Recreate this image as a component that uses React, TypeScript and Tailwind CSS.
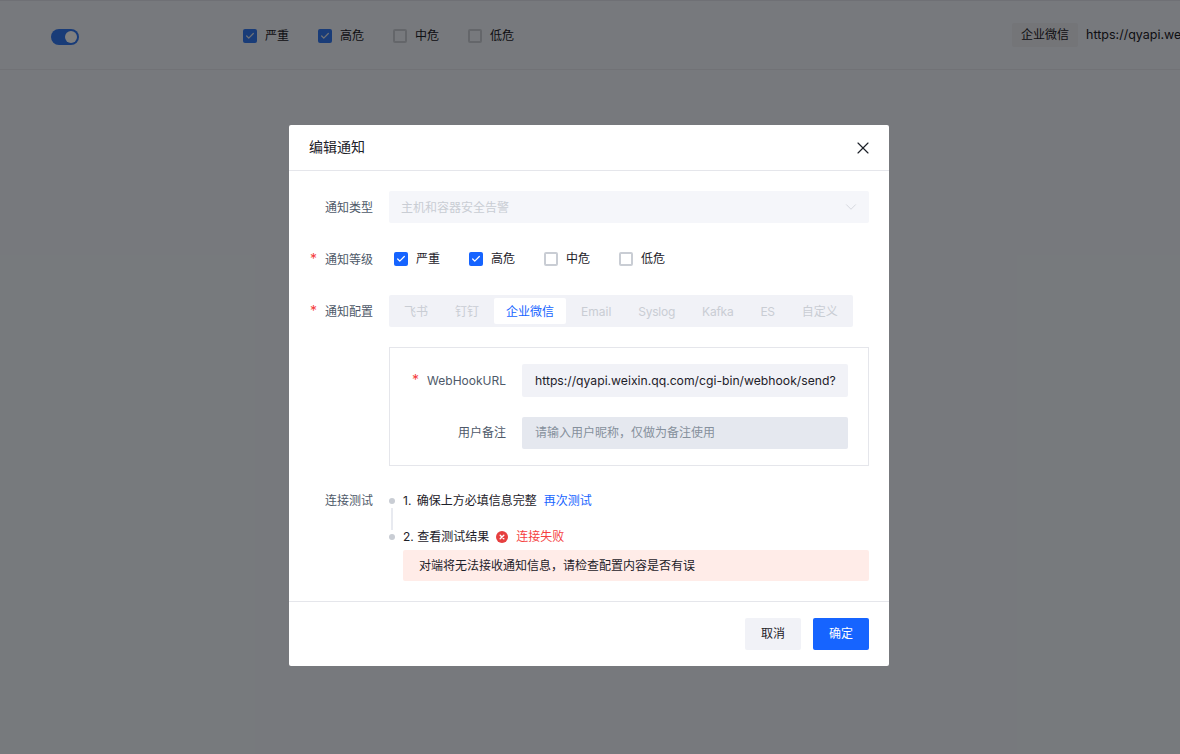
import type { ReactNode } from "react";
import { Check, ChevronDown, X } from "lucide-react";

const font = "font-['Inter','Noto_Sans_CJK_SC',sans-serif]";
const levels = [
  { name: "严重", on: true },
  { name: "高危", on: true },
  { name: "中危", on: false },
  { name: "低危", on: false },
];
const tabs = ["飞书", "钉钉", "企业微信", "Email", "Syslog", "Kafka", "ES", "自定义"];
const tightTabs = ["Syslog", "Kafka", "ES"];
const url = "https://qyapi.weixin.qq.com/cgi-bin/webhook/send?";

const Levels = ({ page }: { page?: boolean }) => (
  <div className="flex items-center gap-[29px]">
    {levels.map((l) => (
      <label key={l.name} className="flex items-center gap-2 whitespace-nowrap text-xs leading-[14px] text-[#1d2129]">
        {l.on ? (
          <span className={`flex h-[14px] w-[14px] items-center justify-center rounded-[2px] ${page ? "bg-[#3278f0]" : "bg-[#1664ff]"}`}>
            <Check size={10} strokeWidth={3} className={page ? "text-[#dfe3ea]" : "text-white"} />
          </span>
        ) : (
          <span className="h-[14px] w-[14px] rounded-[2px] border-2 border-[#c9cdd4]" />
        )}
        {l.name}
      </label>
    ))}
  </div>
);

const Star = () => <span className="mr-2 text-sm leading-3 text-[#f53f3f]">*</span>;

const FormRow = ({ label, required, children, className }: { label: string; required?: boolean; children: ReactNode; className?: string }) => (
  <div className={`flex items-center ${className ?? ""}`}>
    <div className="w-[64px] shrink-0 whitespace-nowrap pt-[2px] text-right text-xs text-[#4e5969]">
      {required && <Star />}
      {label}
    </div>
    <div className="ml-4 min-w-0 flex-1">{children}</div>
  </div>
);

export default function App() {
  return (
    <div className={`relative h-[754px] w-[1180px] overflow-hidden bg-[#eef3fa] ${font}`}>
      {/* page behind the dialog */}
      <div className="flex h-[70px] items-center border-t border-b border-t-[#dfe1ea] border-b-[#e2e4ec] pl-[51px]">
        <span className="mt-[4px] flex h-4 w-7 shrink-0 items-center justify-end rounded-full bg-[#3278f0] pr-[2px]">
          <span className="h-3 w-3 rounded-full bg-white" />
        </span>
        <div className="mt-[2px] ml-[164px] w-[769px] shrink-0">
          <Levels page />
        </div>
        <span className="shrink-0 rounded-[2px] bg-[#e8eaf0] px-[9px] text-xs leading-6 text-[#1d2129]">企业微信</span>
        <span className="ml-2 whitespace-nowrap text-[12.5px] text-[#1d2129]">{url}</span>
      </div>

      {/* mask + dialog */}
      <div className="absolute inset-0 flex items-start justify-center bg-black/50 pr-[2px] pt-[125px]">
        <div className="h-[541px] w-[600px] rounded-[2px] bg-white">
          <div className="flex h-[46px] items-center justify-between border-b border-[#e5e6eb] px-5">
            <span className="mb-[2px] text-sm text-[#1d2129]">编辑通知</span>
            <X size={20} strokeWidth={1.4} className="-mr-[4px] text-[#1d2129]" />
          </div>

          <div className="h-[430px] px-5 pt-5">
            <FormRow label="通知类型">
              <div className="flex h-8 items-center justify-between rounded-[2px] bg-[#f5f6fa] pl-3 pr-[9px] text-xs text-[#c9cdd4]">
                <span className="pt-[2px]">主机和容器安全告警</span>
                <ChevronDown size={18} strokeWidth={1.3} className="text-[#d4d7dd]" />
              </div>
            </FormRow>

            <FormRow label="通知等级" required className="mt-[27px]">
              <div className="pl-[5px]">
                <Levels />
              </div>
            </FormRow>

            <FormRow label="通知配置" required className="mt-[27px]">
              <div className="flex w-[464px] gap-[3px] rounded-[2px] bg-[#f1f2f7] p-[3px]">
                {tabs.map((t) => (
                  <span
                    key={t}
                    className={`h-[26px] whitespace-nowrap rounded-[2px] px-3 text-xs leading-[28px] ${t === "企业微信" ? "bg-white text-[#1664ff]" : "text-[#c9cdd4]"} ${tightTabs.includes(t) ? "tracking-[-0.25px]" : ""}`}
                  >
                    {t}
                  </span>
                ))}
              </div>
            </FormRow>

            <div className="mt-5 ml-[80px] h-[119px] w-[480px] border border-[#e5e6eb] px-5 pt-4">
              <div className="flex items-center">
                <div className="w-[96px] shrink-0 whitespace-nowrap text-right text-xs text-[#4e5969]">
                  <Star />WebHookURL
                </div>
                <div className="ml-4 h-[33px] w-[326px] whitespace-nowrap rounded-[2px] bg-[#f1f2f7] pl-[13px] pr-[12px] text-[12.2px] leading-[33px] text-[#1d2129]">
                  {url}
                </div>
              </div>
              <div className="mt-5 flex items-center">
                <div className="w-[96px] shrink-0 text-right text-xs text-[#4e5969]">用户备注</div>
                <div className="ml-4 h-8 w-[326px] rounded-[2px] bg-[#e5e8ef] px-[13px] text-xs leading-8 text-[#86909c]">
                  请输入用户昵称，仅做为备注使用
                </div>
              </div>
            </div>

            <div className="mt-[25px] flex">
              <div className="w-[64px] text-right text-xs leading-[20px] text-[#4e5969]">连接测试</div>
              <div className="ml-4 flex-1">
                <div className="flex">
                  <div className="flex w-[14px] shrink-0 flex-col items-start">
                    <span className="mt-[7px] h-[6px] w-[6px] rounded-full bg-[#c9cdd4]" />
                    <span className="ml-[2px] mt-[4px] h-[22px] w-[2px] bg-[#e8eaf0]" />
                    <span className="mt-[4px] h-[6px] w-[6px] rounded-full bg-[#c9cdd4]" />
                  </div>
                  <div className="flex-1 text-xs leading-[20px] text-[#1d2129]">
                    <div>
                      <span className="mr-[2px]">1.</span> 确保上方必填信息完整<span className="ml-[7px] text-[#1664ff]">再次测试</span>
                    </div>
                    <div className="mt-4 flex items-center">
                      2. 查看测试结果
                      <svg viewBox="0 0 12 12" className="ml-[7px] h-3 w-3">
                        <circle cx="6" cy="6" r="6" fill="#e63f3f" />
                        <path d="M4.2 4.2l3.6 3.6M7.8 4.2l-3.6 3.6" stroke="#fff" strokeWidth="1.4" strokeLinecap="round" />
                      </svg>
                      <span className="ml-2 text-[#f53f3f]">连接失败</span>
                    </div>
                  </div>
                </div>
                <div className="ml-[14px] mt-[3px] h-[31px] rounded-[2px] bg-[#ffece8] pl-4 text-xs leading-[31px] text-[#1d2129]">
                  对端将无法接收通知信息，请检查配置内容是否有误
                </div>
              </div>
            </div>
          </div>

          <div className="flex h-[65px] items-start justify-end gap-3 border-t border-[#e5e6eb] px-5 pt-4">
            <button className="h-8 w-14 rounded-[2px] bg-[#f1f2f7] text-xs text-[#1d2129]">取消</button>
            <button className="h-8 w-14 rounded-[2px] bg-[#1664ff] text-xs text-white">确定</button>
          </div>
        </div>
      </div>
    </div>
  );
}
